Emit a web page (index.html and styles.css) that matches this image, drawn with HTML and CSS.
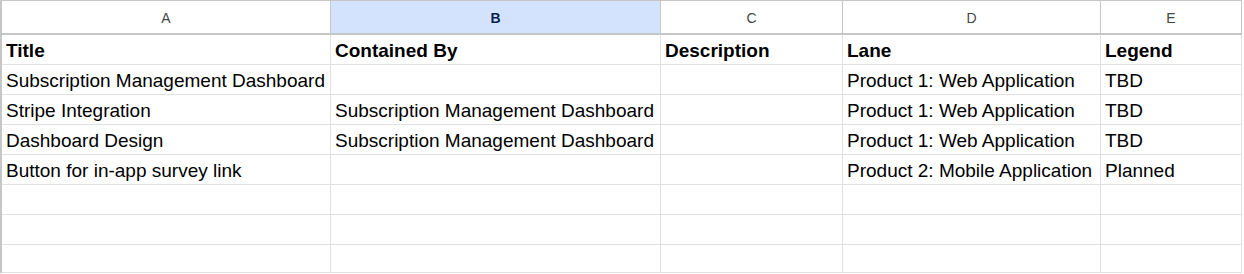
FILE: index.html
```html
<!DOCTYPE html>
<html>
<head>
<meta charset="utf-8">
<link rel="stylesheet" href="styles.css">
</head>
<body>
<div class="sheet">
  <div class="hdr">A</div>
  <div class="hdr sel">B</div>
  <div class="hdr">C</div>
  <div class="hdr">D</div>
  <div class="hdr">E</div>

  <div class="cell b">Title</div>
  <div class="cell b">Contained By</div>
  <div class="cell b">Description</div>
  <div class="cell b">Lane</div>
  <div class="cell b">Legend</div>

  <div class="cell">Subscription Management Dashboard</div>
  <div class="cell"></div>
  <div class="cell"></div>
  <div class="cell">Product 1: Web Application</div>
  <div class="cell">TBD</div>

  <div class="cell">Stripe Integration</div>
  <div class="cell">Subscription Management Dashboard</div>
  <div class="cell"></div>
  <div class="cell">Product 1: Web Application</div>
  <div class="cell">TBD</div>

  <div class="cell">Dashboard Design</div>
  <div class="cell">Subscription Management Dashboard</div>
  <div class="cell"></div>
  <div class="cell">Product 1: Web Application</div>
  <div class="cell">TBD</div>

  <div class="cell">Button for in-app survey link</div>
  <div class="cell"></div>
  <div class="cell"></div>
  <div class="cell">Product 2: Mobile Application</div>
  <div class="cell">Planned</div>

  <div class="cell"></div><div class="cell"></div><div class="cell"></div><div class="cell"></div><div class="cell"></div>
  <div class="cell"></div><div class="cell"></div><div class="cell"></div><div class="cell"></div><div class="cell"></div>
  <div class="cell"></div><div class="cell"></div><div class="cell"></div><div class="cell"></div><div class="cell"></div>
</div>
</body>
</html>
```

FILE: styles.css
```css
html, body {
  margin: 0;
  padding: 0;
  background: #ffffff;
}

.sheet {
  display: grid;
  grid-template-columns: 329px 330px 182px 258px 141px;
  grid-template-rows: 34px repeat(7, 30px) 28px;
  width: 1240px;
  border-left: 2px solid #c4c7c5;
  border-top: 1px solid #c4c7c5;
  font-family: "Liberation Sans", Arial, sans-serif;
  overflow: hidden;
}

.hdr {
  box-sizing: border-box;
  border-right: 1px solid #c4c7c5;
  border-bottom: 2px solid #c4c7c5;
  font-size: 14px;
  color: #444746;
  text-align: center;
  line-height: 32px;
  padding-top: 1px;
  background: #ffffff;
}

.hdr.sel {
  background: #d3e3fd;
  color: #0b1f4d;
  font-weight: bold;
}

.cell {
  box-sizing: border-box;
  border-right: 1px solid #e1e1e1;
  border-bottom: 1px solid #e1e1e1;
  font-size: 19px;
  line-height: 21px;
  color: #000000;
  padding: 0 2px 3px 4px;
  display: flex;
  align-items: flex-end;
  white-space: nowrap;
  overflow: hidden;
}

.cell.b {
  font-weight: bold;
}
```
